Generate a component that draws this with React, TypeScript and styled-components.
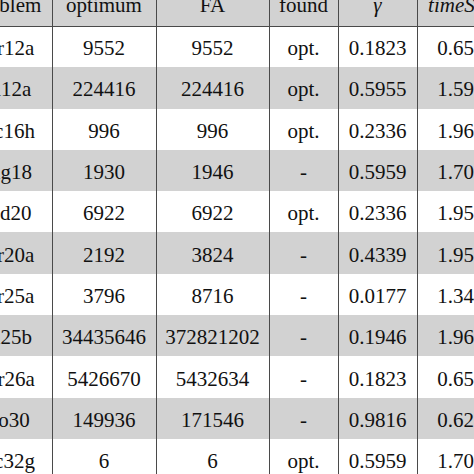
import React from "react";
import styled, { createGlobalStyle } from "styled-components";

const GlobalStyle = createGlobalStyle`
  html, body {
    margin: 0;
    padding: 0;
    background: #ffffff;
    overflow: hidden;
  }
`;

const Frame = styled.div`
  width: 474px;
  height: 474px;
  overflow: hidden;
  background: #ffffff;
`;

const Table = styled.table`
  border-collapse: collapse;
  table-layout: fixed;
  width: 544px;
  margin: -14px 0 0 -40px;
  font-family: "Liberation Serif", "Times New Roman", serif;
  font-size: 21px;
  color: #111111;
`;

const Row = styled.tr<{ $shaded?: boolean }>`
  height: 41.3px;
  background: ${(p) => (p.$shaded ? "#d2d2d2" : "#ffffff")};
`;

const HeadRow = styled.tr`
  height: 40px;
  background: #d2d2d2;
  border-bottom: 1.5px solid #4a4a4a;
`;

const Cell = styled.td`
  padding: 4px 0 0;
  text-align: center;
  vertical-align: middle;
  white-space: nowrap;
  line-height: 1;
  & + & {
    border-left: 1.5px solid #4a4a4a;
  }
`;

const HeadCell = styled(Cell).attrs({ as: "th" })<{ $italic?: boolean }>`
  padding: 0;
  font-weight: normal;
  font-style: ${(p) => (p.$italic ? "italic" : "normal")};
`;

const widths = [92, 104, 113, 69, 79, 87];

const rows = [
  ["chr12a", "9552", "9552", "opt.", "0.1823", "0.654"],
  ["tai12a", "224416", "224416", "opt.", "0.5955", "1.597"],
  ["esc16h", "996", "996", "opt.", "0.2336", "1.964"],
  ["nug18", "1930", "1946", "-", "0.5959", "1.706"],
  ["had20", "6922", "6922", "opt.", "0.2336", "1.955"],
  ["chr20a", "2192", "3824", "-", "0.4339", "1.953"],
  ["chr25a", "3796", "8716", "-", "0.0177", "1.344"],
  ["tai25b", "34435646", "372821202", "-", "0.1946", "1.966"],
  ["bur26a", "5426670", "5432634", "-", "0.1823", "0.654"],
  ["tho30", "149936", "171546", "-", "0.9816", "0.628"],
  ["esc32g", "6", "6", "opt.", "0.5959", "1.706"],
];

export default function App() {
  return (
    <Frame>
      <GlobalStyle />
      <Table>
        <colgroup>
          {widths.map((w, i) => (
            <col key={i} style={{ width: w }} />
          ))}
        </colgroup>
        <thead>
          <HeadRow>
            <HeadCell>Problem</HeadCell>
            <HeadCell>optimum</HeadCell>
            <HeadCell>FA</HeadCell>
            <HeadCell>found</HeadCell>
            <HeadCell $italic>γ</HeadCell>
            <HeadCell $italic>timeSec</HeadCell>
          </HeadRow>
        </thead>
        <tbody>
          {rows.map((r, i) => (
            <Row key={r[0]} $shaded={i % 2 === 1}>
              {r.map((v, j) => (
                <Cell key={j}>{v}</Cell>
              ))}
            </Row>
          ))}
        </tbody>
      </Table>
    </Frame>
  );
}
